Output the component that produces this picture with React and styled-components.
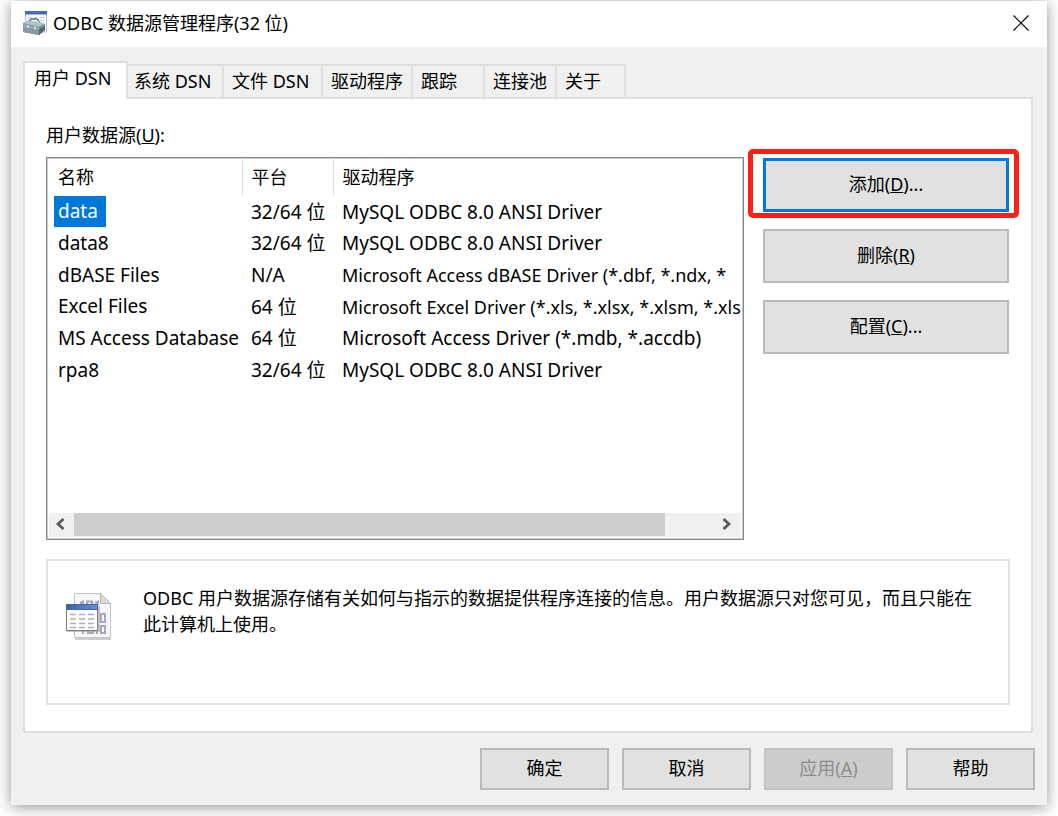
import React from "react";
import styled, { createGlobalStyle } from "styled-components";

const GlobalStyle = createGlobalStyle`
  *, *::before, *::after { box-sizing: border-box; }
  body {
    margin: 0;
    background: #fff;
    color: #000;
    font-family: "Noto Sans", "Noto Sans CJK SC", sans-serif;
    font-size: 18px;
    line-height: 26px;
  }
  button { font: inherit; color: inherit; }
`;

const Dialog = styled.main`
  margin: 1px 11px 11px;
  background: #f0f0f0;
  box-shadow: 0 2px 14px rgba(0, 0, 0, 0.42);
`;

const TitleBar = styled.header`
  display: flex;
  align-items: center;
  height: 46px;
  padding: 0 12px 2px;
  background: #fff;
`;

const Title = styled.h1`
  flex: 1;
  margin: 0 0 0 5px;
  font-size: 18px;
  font-weight: 400;
`;

const CloseButton = styled.button`
  display: flex;
  align-items: center;
  justify-content: center;
  width: 28px;
  height: 28px;
  padding: 0;
  border: 0;
  background: none;
`;

const Body = styled.div`
  padding: 14px 12px 15px;
`;

const Tabs = styled.div`
  display: flex;
  align-items: flex-end;
`;

const Tab = styled.button`
  width: ${(p) => p.$width}px;
  height: 33px;
  padding: 0 0 2px 8px;
  border: 2px solid #dfdfdf;
  border-width: 2px 2px 0 0;
  background: #f0f0f0;
  text-align: left;
  white-space: nowrap;

  &[aria-selected="true"] {
    height: 38px;
    margin-bottom: -2px;
    padding: 0 0 6px 9px;
    border-left-width: 2px;
    background: #fff;
    z-index: 1;
  }

  &[aria-selected="true"] + & {
    padding-left: 6px;
  }
`;

const Panel = styled.section`
  margin-right: 2px;
  padding: 23px 20px 26px 21px;
  border: 2px solid #dfdfdf;
  background: #fff;
`;

const ListLabel = styled.div`
  height: 35px;
`;

const Columns = styled.div`
  display: flex;
  gap: 19px;
`;

const ListBox = styled.div`
  display: flex;
  flex: 1;
  flex-direction: column;
  min-width: 0;
  height: 383px;
  padding: 1px 2px 2px;
  border: 1px solid #828790;
  outline: 1px solid #c8cbd0;
  outline-offset: -2px;
`;

const TableView = styled.div`
  flex: 1;
  overflow: hidden;
`;

const SourceTable = styled.table`
  width: 100%;
  height: 227px;
  border-collapse: collapse;
  table-layout: fixed;
`;

const HeadCell = styled.th`
  width: ${(p) => (p.$width ? `${p.$width}px` : "auto")};
  height: 37px;
  padding: 0 0 2px 9px;
  border-right: ${(p) => (p.$width ? "1px solid #dedede" : "0")};
  font-weight: 400;
  text-align: left;
`;

const Cell = styled.td`
  padding: 0 0 0 9px;
  overflow: hidden;
  font-size: ${(p) => (p.$long ? 18 : 19)}px;
  white-space: nowrap;

  &:first-child { padding-left: 5px; }
`;

const ItemName = styled.span`
  display: inline-block;
  height: 31px;
  padding: 0 8px 0 4px;
  line-height: 31px;
  vertical-align: top;
  background: ${(p) => (p.$selected ? "#0078d7" : "none")};
  color: ${(p) => (p.$selected ? "#fff" : "inherit")};
`;

const ScrollBar = styled.div`
  display: flex;
  height: 24px;
  background: #f0f0f0;
`;

const ScrollArrow = styled.button`
  display: flex;
  align-items: center;
  justify-content: center;
  width: 25px;
  padding: 0 4px 2px 0;
  border: 0;
  background: none;
`;

const ScrollTrack = styled.div`
  flex: 1;
`;

const ScrollThumb = styled.div`
  width: 92%;
  height: 23px;
  background: #cdcdcd;
`;

const Actions = styled.div`
  display: flex;
  flex-direction: column;
  gap: 17px;
  width: 246px;
  margin: 1px 2px 0 0;
`;

const Highlighted = styled.div`
  position: relative;
  display: flex;
  flex-direction: column;

  &::after {
    content: "";
    position: absolute;
    inset: -9px -10px -6px -15px;
    border: 5px solid #ff2013;
    border-radius: 5px;
    pointer-events: none;
  }
`;

const PushButton = styled.button`
  height: ${(p) => (p.$compact ? 42 : 54)}px;
  width: ${(p) => (p.$compact ? "129px" : "auto")};
  padding: 0 0 2px;
  border: ${(p) => (p.$primary ? "3px solid #0078d7" : "2px solid #bababa")};
  background: #e1e1e1;

  &:disabled {
    border-color: #c3c3c3;
    background: #ccc;
    color: #8c8c8c;
  }
`;

const Info = styled.div`
  display: flex;
  gap: 28px;
  height: 146px;
  margin: 19px 1px 0 0;
  padding: 24px 28px 0 17px;
  border: 2px solid #e2e2e2;
`;

const InfoText = styled.p`
  flex: 1;
  margin: 0;
`;

const Footer = styled.footer`
  display: flex;
  justify-content: flex-end;
  gap: 13px;
  margin-top: 15px;
`;

const InfoIcon = styled.svg`
  flex: none;
  margin-top: 6px;
`;

const tabs = [
  ["用户 DSN", 105],
  ["系统 DSN", 96],
  ["文件 DSN", 99],
  ["驱动程序", 90],
  ["跟踪", 72],
  ["连接池", 72],
  ["关于", 69],
];

const sources = [
  ["data", "32/64 位", "MySQL ODBC 8.0 ANSI Driver"],
  ["data8", "32/64 位", "MySQL ODBC 8.0 ANSI Driver"],
  ["dBASE Files", "N/A", "Microsoft Access dBASE Driver (*.dbf, *.ndx, *"],
  ["Excel Files", "64 位", "Microsoft Excel Driver (*.xls, *.xlsx, *.xlsm, *.xls"],
  ["MS Access Database", "64 位", "Microsoft Access Driver (*.mdb, *.accdb)"],
  ["rpa8", "32/64 位", "MySQL ODBC 8.0 ANSI Driver"],
];

function AppIcon() {
  return (
    <svg width="25" height="25" viewBox="0 0 25 25" aria-hidden="true">
      <defs>
        <linearGradient id="box" x1="0" y1="0" x2="0" y2="1">
          <stop offset="0" stopColor="#a9bcc4" />
          <stop offset="1" stopColor="#657d88" />
        </linearGradient>
      </defs>
      <path d="M2.5 1h21v20h-21z" fill="#f7f8fa" stroke="#b8c0c9" />
      <path d="M2 0h22v3.500H2z" fill="#416eb0" />
      <path d="M5 6.500h4m2 0h4m2 0h4M5 9.500h3m9 0h4M18 12.500h3" stroke="#c5ccd7" />
      <path d="M7 12V9.500q0-1.500 2-1.500h4q2 0 2.500 1.500l1 2.500" fill="none" stroke="#586b74" strokeWidth="1.300" />
      <path d="M0 12l4-2 13 1 5 2v6l-6 5L0 21z" fill="url(#box)" />
      <path d="M0 12l4-2 13 1 5 2-6 3z" fill="#b3c2c9" />
      <path d="M0 12v9l16 3v-8z" fill="#8499a2" />
      <path d="M16 16l6-3v6l-6 5z" fill="#536973" />
      <path d="M0 14.500l16 3 6-3.500" fill="none" stroke="#b7c6cc" strokeWidth=".8" />
      <path d="M4 14h2v3H4zM11 15.500h2v3h-2z" fill="#cbd6da" />
    </svg>
  );
}

function SourceIcon() {
  return (
    <InfoIcon width="50" height="52" viewBox="0 0 50 52" aria-hidden="true">
      <defs>
        <linearGradient id="bar" x1="0" y1="0" x2="1" y2="0">
          <stop offset="0" stopColor="#3d639f" />
          <stop offset="1" stopColor="#6592d2" />
        </linearGradient>
      </defs>
      <path d="M10 4h26l10 10v35H10z" fill="#cfcfcf" />
      <path d="M9.500 2.500h26l10 10v34h-36z" fill="#f7f7f7" stroke="#c4c4c4" />
      <path d="M35.500 2.500v10h10z" fill="#dcdcdc" stroke="#b4b4b4" />
      <g fill="none" stroke="#aaa5c3" strokeWidth="2">
        <path d="M15 12l3-1.500V14M22 14v-3.500h5V14M30 12l3-1.500V14" />
        <path d="M36 23h4v8h-4zM36 35h4v7h-4zM18 38v5M23 38v4h5v-4M32 38v5" />
      </g>
      <path d="M2 15h33v26H2z" fill="#999" opacity=".55" />
      <path d="M1.500 13.500h31v26h-31z" fill="#fff" stroke="#7c7c7c" />
      <path d="M1.500 13.500h31v5h-31z" fill="url(#bar)" stroke="#3f69a6" />
      <path d="M5 23.500h6m3 0h6m3 0h6M5 28h6m3 0h6m3 0h6M5 32.500h6m3 0h6m3 0h6M5 36.500h6m3 0h6m3 0h6" stroke="#b0b0b0" strokeWidth="1.300" />
    </InfoIcon>
  );
}

function Chevron({ right }) {
  return (
    <svg width="12" height="12" viewBox="0 0 12 12" aria-hidden="true">
      <path d={right ? "M2.500 1l5.500 5-5.500 5" : "M9.500 1L4 6l5.500 5"} fill="none" stroke="#5a5a5a" strokeWidth="2.800" />
    </svg>
  );
}

export default function App() {
  return (
    <>
      <GlobalStyle />
      <Dialog>
        <TitleBar>
          <AppIcon />
          <Title>ODBC 数据源管理程序(32 位)</Title>
          <CloseButton aria-label="关闭">
            <svg width="16" height="16" viewBox="0 0 16 16" aria-hidden="true">
              <path d="M.5.5l15 15M15.500.5l-15 15" stroke="#000" strokeWidth="1.100" />
            </svg>
          </CloseButton>
        </TitleBar>
        <Body>
          <Tabs role="tablist">
            {tabs.map(([name, width], i) => (
              <Tab key={name} role="tab" aria-selected={i === 0} $width={width}>
                {name}
              </Tab>
            ))}
          </Tabs>
          <Panel role="tabpanel">
            <ListLabel id="sources-label">用户数据源(<u>U</u>):</ListLabel>
            <Columns>
              <ListBox>
                <TableView>
                  <SourceTable aria-labelledby="sources-label">
                    <thead>
                      <tr>
                        <HeadCell $width={193}>名称</HeadCell>
                        <HeadCell $width={91}>平台</HeadCell>
                        <HeadCell>驱动程序</HeadCell>
                      </tr>
                    </thead>
                    <tbody>
                      {sources.map(([name, platform, driver], i) => (
                        <tr key={name}>
                          <Cell><ItemName $selected={i === 0}>{name}</ItemName></Cell>
                          <Cell>{platform}</Cell>
                          <Cell $long={driver.length > 42}>{driver}</Cell>
                        </tr>
                      ))}
                    </tbody>
                  </SourceTable>
                </TableView>
                <ScrollBar>
                  <ScrollArrow aria-label="向左滚动"><Chevron /></ScrollArrow>
                  <ScrollTrack><ScrollThumb /></ScrollTrack>
                  <ScrollArrow aria-label="向右滚动"><Chevron right /></ScrollArrow>
                </ScrollBar>
              </ListBox>
              <Actions>
                <Highlighted>
                  <PushButton $primary>添加(<u>D</u>)...</PushButton>
                </Highlighted>
                <PushButton>删除(<u>R</u>)</PushButton>
                <PushButton>配置(<u>C</u>)...</PushButton>
              </Actions>
            </Columns>
            <Info>
              <SourceIcon />
              <InfoText>
                ODBC 用户数据源存储有关如何与指示的数据提供程序连接的信息。用户数据源只对您可见，而且只能在此计算机上使用。
              </InfoText>
            </Info>
          </Panel>
          <Footer>
            <PushButton $compact>确定</PushButton>
            <PushButton $compact>取消</PushButton>
            <PushButton $compact disabled>应用(<u>A</u>)</PushButton>
            <PushButton $compact>帮助</PushButton>
          </Footer>
        </Body>
      </Dialog>
    </>
  );
}
